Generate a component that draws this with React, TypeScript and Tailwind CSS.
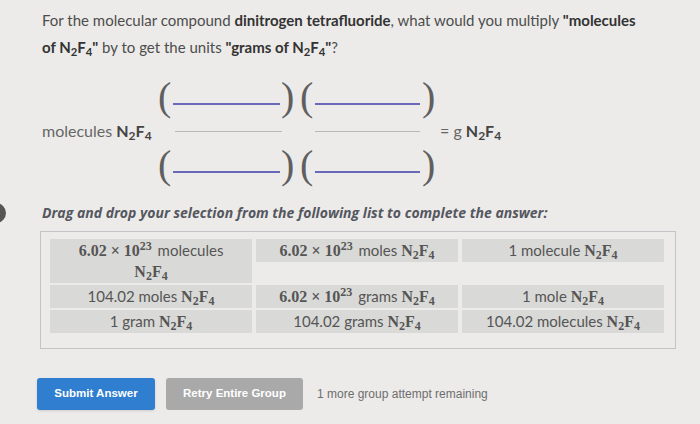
const sans = "font-['Lato','Open_Sans',sans-serif]";
const serif = "font-['Liberation_Serif','Times_New_Roman',serif]";

function N2F4({ className = '' }: { className?: string }) {
  return (
    <span className={className}>
      N<sub>2</sub>F<sub>4</sub>
    </span>
  );
}

function MathN2F4() {
  return (
    <span className={`${serif} font-bold text-[16px]`}>
      N<sub>2</sub>F<sub>4</sub>
    </span>
  );
}

function Avogadro() {
  return (
    <span className={`${serif} font-bold text-[16px] mr-[2px]`}>
      6.02 × 10<sup>23</sup>
    </span>
  );
}

function Tile({ children }: { children: React.ReactNode }) {
  return (
    <div className="bg-[#d9d9d7] text-[#555] text-[15px] leading-[21px] text-center px-2 py-[1px]">
      {children}
    </div>
  );
}

function ParenRow() {
  return (
    <div className="flex items-start h-[36px]">
      <div className="w-[116px]" />
      <span className={`${serif} text-[40px] leading-[36px] text-[#5f5f5f] w-[15px]`}>(</span>
      <div className="w-[107px] h-[26px] border-b-2 border-[#6a68b8] mr-[1px]" />
      <span className={`${serif} text-[40px] leading-[36px] text-[#5f5f5f] w-[14px]`}>)</span>
      <span className={`${serif} text-[40px] leading-[36px] text-[#5f5f5f] w-[20px] pl-[5px]`}>(</span>
      <div className="w-[105px] h-[26px] border-b-2 border-[#6a68b8] mr-[2px]" />
      <span className={`${serif} text-[40px] leading-[36px] text-[#5f5f5f]`}>)</span>
    </div>
  );
}

export default function App() {
  return (
    <div className={`relative w-[700px] h-[424px] overflow-hidden bg-[#ecebe9] ${sans} text-[#4d4d4d]`}>
      {/* edge of a control cut off at the left */}
      <div className="absolute left-[-14px] top-[203px] w-[20px] h-[20px] rounded-full bg-[#555]" />

      <div className="px-[42px] pt-[7px]">
        <p className="text-[15px] leading-[27px]">
          For the molecular compound <b className="text-[#333]">dinitrogen tetrafluoride</b>, what would you
          multiply <b className="text-[#333]">"molecules</b>
          <br />
          <b className="text-[#333]">of <N2F4 />"</b> by to get the units{' '}
          <b className="text-[#333]">"grams of <N2F4 />"</b>?
        </p>

        {/* conversion setup */}
        <div className="mt-[18px]">
          <ParenRow />
          <div className="flex items-center h-[32px] text-[16px]">
            <div className="w-[133px] whitespace-nowrap text-[#666]">
              molecules <N2F4 className="font-bold text-[#444]" />
            </div>
            <div className="w-[107px] border-t border-[#b8b8b8]" />
            <div className="w-[33px]" />
            <div className="w-[105px] border-t border-[#b8b8b8]" />
            <div className="ml-[20px] whitespace-nowrap text-[#666]">
              = g <N2F4 className="font-bold text-[#444]" />
            </div>
          </div>
          <ParenRow />
        </div>

        <p className="mt-[20px] font-['Open_Sans',sans-serif] text-[14px] leading-[20px] italic font-bold text-[#55575f]">
          Drag and drop your selection from the following list to complete the answer:
        </p>

        {/* answer bank */}
        <div className="mt-[8px] w-[636px] -ml-[2px] border-[1.5px] border-[#c4c4c8] pt-[7px] pb-[15px] pl-[9px] pr-[11px]">
          <div className="grid grid-cols-3 gap-x-[4px] gap-y-[2px] items-start">
            <Tile>
              <Avogadro /> molecules
              <br />
              <MathN2F4 />
            </Tile>
            <Tile>
              <Avogadro /> moles <MathN2F4 />
            </Tile>
            <Tile>
              1 molecule <MathN2F4 />
            </Tile>
            <Tile>
              104.02 moles <MathN2F4 />
            </Tile>
            <Tile>
              <Avogadro /> grams <MathN2F4 />
            </Tile>
            <Tile>
              1 mole <MathN2F4 />
            </Tile>
            <Tile>
              1 gram <MathN2F4 />
            </Tile>
            <Tile>
              104.02 grams <MathN2F4 />
            </Tile>
            <Tile>
              104.02 molecules <MathN2F4 />
            </Tile>
          </div>
        </div>

        {/* actions */}
        <div className="mt-[29px] -ml-[5px] flex items-center font-['Liberation_Sans',Arial,sans-serif]">
          <button className="w-[118px] h-[32px] rounded-[3px] bg-[#2f7ecf] text-white text-[11.5px] font-bold shadow-sm">
            Submit Answer
          </button>
          <button className="ml-[11px] w-[137px] h-[32px] rounded-[3px] bg-[#a9a9a9] text-white text-[11.5px] font-bold">
            Retry Entire Group
          </button>
          <span className="ml-[14px] text-[12px] text-[#6e6e6e]">1 more group attempt remaining</span>
        </div>
      </div>
    </div>
  );
}
